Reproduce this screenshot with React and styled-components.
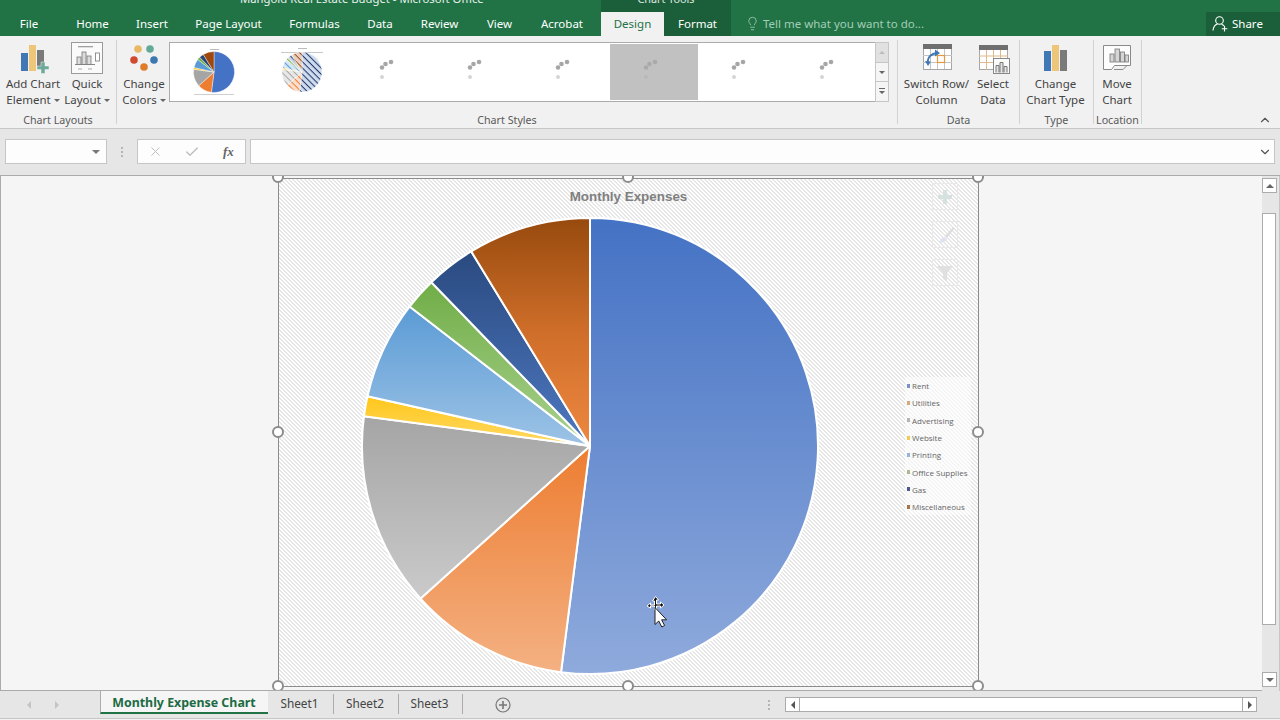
import React from "react";
import styled, { createGlobalStyle } from "styled-components";
import { Lightbulb, ChevronUp, ChevronDown, X, Check } from "lucide-react";

const Global = createGlobalStyle`
  html, body { margin: 0; padding: 0; height: 720px; overflow: hidden; background: #f1f1f1; }
  * { box-sizing: border-box; }
  #root { font-family: "Noto Sans", "Open Sans", sans-serif; }
`;

const Page = styled.div`
  width: 1280px;
  height: 720px;
  display: flex;
  flex-direction: column;
  overflow: hidden;
`;

/* ---------- title + tabs ---------- */
const TitleBar = styled.header`
  height: 36px;
  background: #217346;
  display: flex;
  flex-direction: column;
  flex: none;
`;
const TitleRow = styled.div`
  height: 12px;
  display: flex;
  overflow: hidden;
  color: #fff;
  font-size: 11.3px;
  line-height: 16px;
`;
const DocTitle = styled.div`
  width: 601px;
  padding-left: 240px;
  margin-top: -9px;
  white-space: nowrap;
  opacity: 0.9;
`;
const ToolsLabel = styled.div`
  width: 130px;
  height: 12px;
  background: #1b5f3a;
  text-align: center;
  font-size: 10.8px;
`;
const ToolsText = styled.span`
  display: block;
  margin-top: -9px;
  opacity: 0.85;
`;
const TabRow = styled.nav`
  height: 24px;
  display: flex;
  align-items: stretch;
  font-size: 11.5px;
  color: #fff;
`;
const RibbonTab = styled.div`
  width: ${(p) => p.$w}px;
  flex: none;
  margin-right: ${(p) => p.$mr || 0}px;
  padding-bottom: 2px;
  display: flex;
  align-items: center;
  justify-content: center;
  background: ${(p) => (p.$active ? "#f1f1f1" : p.$tool ? "#1b5f3a" : "transparent")};
  color: ${(p) => (p.$active ? "#217346" : "#fff")};
`;
const TellMe = styled.div`
  display: flex;
  align-items: center;
  gap: 3px;
  width: 475px;
  flex: none;
  padding: 0 0 2px 14px;
  color: #a3cdb5;
`;
const Share = styled.div`
  width: 74px;
  flex: none;
  background: #1b5f3a;
  display: flex;
  align-items: center;
  gap: 3px;
  padding: 0 0 2px 6px;
`;

/* ---------- ribbon ---------- */
const Ribbon = styled.section`
  height: 93px;
  flex: none;
  display: flex;
  background: #f1f1f1;
  border-bottom: 1px solid #c6c6c6;
`;
const Group = styled.div`
  width: ${(p) => p.$w}px;
  height: 84px;
  flex: none;
  margin-top: 4px;
  display: flex;
  flex-direction: column;
  border-right: 1px solid #d2d2d2;
`;
const GroupBody = styled.div`
  height: 72px;
  flex: none;
  display: flex;
  padding-left: ${(p) => p.$pad || 0}px;
`;
const GroupLabel = styled.div`
  height: 12px;
  flex: none;
  line-height: 16px;
  text-align: center;
  font-size: 10.7px;
  color: #5a5a5a;
  white-space: nowrap;
`;
const ToolButton = styled.div`
  width: ${(p) => p.$w}px;
  flex: none;
  display: flex;
  flex-direction: column;
  align-items: center;
  font-size: 11.5px;
  line-height: 16px;
  color: #444;
  white-space: nowrap;
  svg { display: block; flex: none; margin-bottom: -1px; }
`;
const Caret = styled.span`
  display: inline-block;
  width: 0;
  height: 0;
  margin-left: 3px;
  vertical-align: 2px;
  border-left: 3px solid transparent;
  border-right: 3px solid transparent;
  border-top: 3px solid #666;
`;
const Gallery = styled.div`
  width: 720px;
  height: 60px;
  flex: none;
  margin: 2px 0 0 1px;
  display: flex;
`;
const GalleryCells = styled.div`
  width: 706px;
  height: 60px;
  flex: none;
  display: flex;
  background: #fff;
  border: 1px solid #ababab;
  border-right: none;
  padding: 1px 0 0 0;
`;
const GalleryCell = styled.div`
  width: 88px;
  height: 56px;
  flex: none;
  background: ${(p) => (p.$sel ? "#c1c1c1" : "transparent")};
  svg { display: block; }
`;
const GalleryScroll = styled.div`
  width: 14px;
  height: 60px;
  flex: none;
  display: flex;
  flex-direction: column;
  border: 1px solid #c6c6c6;
  border-left: none;
`;
const GalleryBtn = styled.div`
  flex: 1;
  display: flex;
  align-items: center;
  justify-content: center;
  background: ${(p) => (p.$off ? "#e1e1e1" : "#f5f5f5")};
  border-bottom: ${(p) => (p.$end ? "none" : "1px solid #c6c6c6")};
  border-left: 1px solid #c6c6c6;
`;
const Collapse = styled.div`
  margin: 76px 8px 0 auto;
  width: 14px;
  height: 16px;
  color: #555;
  display: flex;
  align-items: center;
  justify-content: center;
`;

/* ---------- formula bar ---------- */
const FormulaBar = styled.section`
  height: 47px;
  flex: none;
  background: #e6e6e6;
  border-bottom: 1px solid #ababab;
  display: flex;
  align-items: flex-start;
  padding: 10px 5px 0 5px;
`;
const FieldBox = styled.div`
  height: 25px;
  width: ${(p) => (p.$w ? p.$w + "px" : "auto")};
  flex: ${(p) => (p.$w ? "none" : "1")};
  margin-left: ${(p) => p.$ml || 0}px;
  background: #fdfdfd;
  border: 1px solid #c6c6c6;
  display: flex;
  align-items: center;
  color: #bdbdbd;
`;
const NameArrow = styled.span`
  margin-left: auto;
  margin-right: 6px;
  width: 0;
  height: 0;
  border-left: 4px solid transparent;
  border-right: 4px solid transparent;
  border-top: 4px solid #777;
`;
const Grip = styled.div`
  width: 30px;
  height: 25px;
  flex: none;
  display: flex;
  flex-direction: column;
  align-items: center;
  justify-content: center;
  gap: 2px;
`;
const GripDot = styled.i`
  width: 2px;
  height: 2px;
  background: #b5b5b5;
`;
const CancelGlyph = styled(X)`
  margin-left: 10px;
`;
const ConfirmGlyph = styled(Check)`
  margin-left: 21px;
`;
const FxGlyph = styled.span`
  font-family: "Liberation Serif", serif;
  font-style: italic;
  font-weight: 700;
  font-size: 13px;
  color: #666;
  margin-left: 23px;
`;
const EndChevron = styled.span`
  margin-left: auto;
  margin-right: 2px;
  display: flex;
  color: #555;
`;

/* ---------- sheet ---------- */
const SheetRow = styled.main`
  height: 515px;
  flex: none;
  display: flex;
  overflow: hidden;
`;
const SheetArea = styled.div`
  width: 1262px;
  height: 515px;
  flex: none;
  background: #f5f5f5;
  border-left: 1px solid #ababab;
  border-bottom: 1px solid #ababab;
  padding: 2px 0 0 277px;
  position: relative;
  overflow: hidden;
`;
const Chart = styled.div`
  position: relative;
  width: 701px;
  height: 509px;
  box-shadow: inset 0 0 0 1px #8c8c8c;
  background-color: #fff;
  background-image: linear-gradient(
    45deg,
    #e7e7e7 25%,
    transparent 25%,
    transparent 50%,
    #e7e7e7 50%,
    #e7e7e7 75%,
    transparent 75%
  );
  background-size: 4px 4px;
  svg.pie { display: block; }
`;
const ChartTitle = styled.div`
  position: absolute;
  left: 0;
  right: 0;
  top: 10px;
  text-align: center;
  font-family: "Liberation Sans", Arial, sans-serif;
  font-weight: 700;
  font-size: 13.4px;
  line-height: 18px;
  color: #7f7f7f;
`;
const Handle = styled.span`
  position: absolute;
  left: ${(p) => p.$x}px;
  top: ${(p) => p.$y}px;
  width: 12px;
  height: 12px;
  margin: -6px 0 0 -6px;
  border-radius: 50%;
  background: #fff;
  border: 2px solid #8c8c8c;
`;
const ChartTools = styled.div`
  position: absolute;
  left: 654px;
  top: 5px;
  display: flex;
  flex-direction: column;
  gap: 11px;
`;
const ChartTool = styled.div`
  width: 26px;
  height: 27px;
  border: 1px solid #e9e9e9;
  display: flex;
  align-items: center;
  justify-content: center;
`;
const Legend = styled.ul`
  position: absolute;
  left: 627px;
  top: 199px;
  width: 66px;
  margin: 0;
  padding: 0 0 0 2px;
  list-style: none;
  background: rgba(255, 255, 255, 0.55);
  font-family: "Open Sans", sans-serif;
  font-size: 8px;
  color: #666;
`;
const LegendItem = styled.li`
  height: 17.3px;
  display: flex;
  align-items: center;
  gap: 2px;
  white-space: nowrap;
`;
const Swatch = styled.i`
  width: 3px;
  height: 4px;
  background: ${(p) => p.$c};
  flex: none;
`;
const PointerBox = styled.div`
  position: absolute;
  left: 360px;
  top: 417px;
  width: 36px;
  height: 36px;
  svg { display: block; }
`;
const VScroll = styled.aside`
  width: 18px;
  height: 515px;
  flex: none;
  background: #e6e6e6;
  padding: 2px 3px 0 0;
  border-right: 1px solid #c6c6c6;
  display: flex;
  flex-direction: column;
`;
const ScrollBtn = styled.div`
  width: 15px;
  height: 15px;
  flex: none;
  background: #fff;
  border: 1px solid #ababab;
  display: flex;
  align-items: center;
  justify-content: center;
`;
const VThumb = styled.div`
  margin-top: 20px;
  height: 412px;
  flex: none;
  background: #fff;
  border: 1px solid #ababab;
`;
const VGap = styled.div`
  flex: none;
  height: 47px;
`;
const Arrow = styled.span`
  width: 0;
  height: 0;
  ${(p) =>
    p.$dir === "up"
      ? "border-left:4px solid transparent;border-right:4px solid transparent;border-bottom:4px solid #666;"
      : p.$dir === "down"
      ? "border-left:4px solid transparent;border-right:4px solid transparent;border-top:4px solid #666;"
      : p.$dir === "left"
      ? `border-top:4px solid transparent;border-bottom:4px solid transparent;border-right:4px solid ${p.$c || "#555"};`
      : `border-top:4px solid transparent;border-bottom:4px solid transparent;border-left:4px solid ${p.$c || "#555"};`}
`;

/* ---------- sheet tabs ---------- */
const TabBar = styled.footer`
  height: 28px;
  flex: none;
  background: #e6e6e6;
  border-bottom: 1px solid #c6c6c6;
  display: flex;
  align-items: flex-start;
`;
const TabNav = styled.div`
  width: 100px;
  height: 27px;
  flex: none;
  display: flex;
  align-items: center;
  padding-left: 27px;
  gap: 24px;
`;
const SheetTab = styled.div`
  width: ${(p) => p.$w}px;
  height: 23px;
  flex: none;
  display: flex;
  align-items: center;
  justify-content: center;
  padding: ${(p) => (p.$active ? "2px 1px 0 0" : "0 2px 0 0")};
  font-size: ${(p) => (p.$active ? "12.4px" : "11.8px")};
  font-weight: ${(p) => (p.$active ? 700 : 400)};
  color: ${(p) => (p.$active ? "#1c6b43" : "#444")};
  background: ${(p) => (p.$active ? "#f5f5f5" : "transparent")};
  border-bottom: ${(p) => (p.$active ? "2px solid #217346" : "none")};
  border-left: ${(p) => (p.$active ? "1px solid #ababab" : "none")};
  white-space: nowrap;
`;
const TabSep = styled.i`
  width: 1px;
  height: 20px;
  margin-top: 3px;
  background: #ababab;
  flex: none;
`;
const AddSheet = styled.div`
  width: 80px;
  height: 27px;
  display: flex;
  align-items: center;
  justify-content: center;
  flex: none;
`;
const BarGrip = styled.div`
  width: 242px;
  height: 27px;
  padding-left: 225px;
  display: flex;
  flex-direction: column;
  justify-content: center;
  gap: 2px;
  flex: none;
`;
const HScroll = styled.div`
  width: 472px;
  height: 15px;
  margin-top: 6px;
  display: flex;
  flex: none;
`;
const HThumb = styled.div`
  flex: 1;
  background: #fff;
  border-top: 1px solid #ababab;
  border-bottom: 1px solid #ababab;
`;

/* ---------- data ---------- */
const SLICES = [
  { name: "Rent", a: 0, b: 187.3, c: "#4472c4", stops: ["#4472c4", "#8faadc"], sw: "#7a93c4" },
  { name: "Utilities", a: 187.3, b: 228, c: "#ed7d31", stops: ["#ed7d31", "#f4b183"], sw: "#d8a878" },
  { name: "Advertising", a: 228, b: 277.5, c: "#a5a5a5", stops: ["#a5a5a5", "#cacaca"], sw: "#b5b5b5" },
  { name: "Website", a: 277.5, b: 282.6, c: "#ffc000", stops: ["#ffc71a", "#ffd966"], sw: "#edcc55" },
  { name: "Printing", a: 282.6, b: 307.7, c: "#5b9bd5", stops: ["#5b9bd5", "#9dc3e6"], sw: "#93b5d9" },
  { name: "Office Supplies", a: 307.7, b: 315.9, c: "#70ad47", stops: ["#70ad47", "#a9d18e"], sw: "#a8ba86" },
  { name: "Gas", a: 315.9, b: 328.6, c: "#264478", stops: ["#2a4a80", "#4e78c0"], sw: "#4a5a8c" },
  { name: "Miscellaneous", a: 328.6, b: 360, c: "#9e480e", stops: ["#974a0e", "#cf6e2a", "#ee8840"], sw: "#a8744a" },
];

const pt = (cx, cy, r, deg) => {
  const t = (deg * Math.PI) / 180;
  return [cx + r * Math.sin(t), cy - r * Math.cos(t)];
};
const slice = (cx, cy, r, a, b) => {
  const [x0, y0] = pt(cx, cy, r, a);
  const [x1, y1] = pt(cx, cy, r, b);
  return `M${cx} ${cy}L${x0.toFixed(2)} ${y0.toFixed(2)}A${r} ${r} 0 ${b - a > 180 ? 1 : 0} 1 ${x1.toFixed(2)} ${y1.toFixed(2)}Z`;
};

const Spinner = ({ sel }) => (
  <svg width="88" height="56" viewBox="0 0 88 56">
    <g fill={sel ? "#aaaaaa" : "#a6a6a6"}>
      <circle cx="36" cy="23.5" r="2.3" />
      <circle cx="39.5" cy="20" r="2.3" />
      <circle cx="45" cy="18" r="2.3" />
    </g>
    <circle cx="36" cy="33" r="2" fill={sel ? "#b8b8b8" : "#d5d5d5"} />
  </svg>
);

const ThumbSolid = () => (
  <svg width="88" height="56" viewBox="0 0 88 56">
    <rect x="40" y="5" width="9" height="0.8" fill="#aaa" />
    {SLICES.map((s) => (
      <path key={s.name} d={slice(44, 28, 20.5, s.a, s.b)} fill={s.c} stroke="#fff" strokeWidth="0.4" />
    ))}
    <rect x="24" y="50" width="40" height="0.8" fill="#c4c4c4" />
  </svg>
);

const ThumbHatch = () => (
  <svg width="88" height="56" viewBox="0 0 88 56">
    <defs>
      {SLICES.map((s, i) => (
        <pattern key={s.name} id={`h${i}`} width="4.4" height="4.4" patternUnits="userSpaceOnUse" patternTransform="rotate(45)">
          <rect width="4.4" height="4.4" fill="#fff" />
          <rect width="4.4" height="2.6" fill={s.c} opacity="0.25" />
          <rect y="2.6" width="4.4" height="1.2" fill={i === 0 ? "#1f3a6e" : s.c} />
        </pattern>
      ))}
    </defs>
    <rect x="40" y="4" width="9" height="0.8" fill="#aaa" />
    <rect x="23" y="8" width="42" height="0.8" fill="#bbb" />
    {SLICES.map((s, i) => (
      <path key={s.name} d={slice(44, 28, 20, s.a, s.b)} fill={`url(#h${i})`} stroke="#fff" strokeWidth="0.4" />
    ))}
  </svg>
);

const AddChartIcon = () => (
  <svg width="36" height="37" viewBox="15 40 36 37">
    <rect x="21" y="53" width="7" height="18" fill="#3f78b5" />
    <rect x="29" y="45" width="7" height="26" fill="#eec67a" />
    <rect x="37" y="50" width="7" height="18" fill="#7a7a7a" />
    <path d="M41 62h4v4h4v3.5h-4v4h-4v-4h-4v-3.5h4z" fill="#6fa99a" stroke="#f1f1f1" strokeWidth="0.5" />
  </svg>
);
const QuickLayoutIcon = () => (
  <svg width="36" height="37" viewBox="69 40 36 37">
    <rect x="71.5" y="42.5" width="31" height="31" fill="#fafafa" stroke="#9a9a9a" />
    <rect x="78" y="46" width="15" height="1.3" fill="#a0a0a0" />
    <path d="M75 64.5h20" stroke="#888" fill="none" />
    <g fill="#dcdcdc" stroke="#777" strokeWidth="0.8">
      <rect x="77" y="57" width="4" height="7.5" />
      <rect x="82" y="52" width="4" height="12.5" />
      <rect x="87" y="56" width="4" height="8.5" />
    </g>
    <rect x="95.5" y="53" width="4" height="8" fill="#fff" stroke="#777" strokeWidth="0.8" />
    <path d="M78 69h4M88 69h4" stroke="#aaa" />
  </svg>
);
const ChangeColorsIcon = () => (
  <svg width="36" height="37" viewBox="126 40 36 37">
    <circle cx="138" cy="49" r="3.8" fill="#e9b865" />
    <circle cx="150" cy="49" r="3.8" fill="#63a998" />
    <circle cx="134" cy="60" r="3.8" fill="#d04a30" />
    <circle cx="154" cy="60" r="3.8" fill="#3b78b0" />
    <circle cx="144" cy="67" r="3.8" fill="#e07b28" />
  </svg>
);
const SwitchIcon = () => (
  <svg width="36" height="37" viewBox="918 40 36 37">
    <rect x="922.5" y="44.5" width="28" height="25" fill="#fff" stroke="#a6a6a6" />
    <rect x="922" y="44" width="29" height="5" fill="#6e6e6e" />
    <path d="M922 55.5h29M922 62.5h29M929.5 49v20M936.5 49v20M943.5 49v20" stroke="#c4c4c4" fill="none" />
    <rect x="936.5" y="55.5" width="7" height="7" fill="none" stroke="#e39a3c" strokeWidth="1.2" />
    <path d="M927 63c-1-6 4-10 10-10" stroke="#3f78b5" strokeWidth="1.8" fill="none" />
    <path d="M934 49.5l5 3.5-5 3.5z M924 61l6 .5-3 4.5z" fill="#3f78b5" />
  </svg>
);
const SelectDataIcon = () => (
  <svg width="36" height="37" viewBox="975 40 36 37">
    <rect x="979.5" y="45.5" width="28" height="24" fill="#fff" stroke="#a6a6a6" />
    <rect x="979" y="45" width="29" height="5" fill="#6e6e6e" />
    <path d="M979 56h29M979 62.5h29M986.5 50v20M993.5 50v20M1000.5 50v20" stroke="#e0b98a" fill="none" />
    <rect x="993.5" y="58.5" width="16" height="15" fill="#fbfbfb" stroke="#888" />
    <path d="M996 72.5v-7h3v7M1000 72.5v-10h3v10M1004 72.5v-6h3v6" stroke="#777" fill="#e4e4e4" />
  </svg>
);
const ChangeTypeIcon = () => (
  <svg width="36" height="37" viewBox="1037 40 36 37">
    <rect x="1043" y="51" width="7" height="20" fill="#3f78b5" />
    <rect x="1051" y="45" width="7" height="26" fill="#eec67a" />
    <rect x="1059" y="50" width="7" height="21" fill="#7a7a7a" />
  </svg>
);
const MoveChartIcon = () => (
  <svg width="36" height="37" viewBox="1099 40 36 37">
    <path d="M1103.5 45.5h27v20h-16l-3 4h-8z" fill="#fdfdfd" stroke="#8a8a8a" />
    <path d="M1114 69.5h9l4-4" fill="none" stroke="#8a8a8a" />
    <g fill="#d6d6d6" stroke="#777" strokeWidth="0.8">
      <rect x="1110" y="54" width="4" height="8" />
      <rect x="1115" y="49" width="4.5" height="13" />
      <rect x="1120.5" y="52" width="4" height="10" />
      <rect x="1125" y="55" width="3.5" height="7" />
    </g>
  </svg>
);
const ShareIcon = () => (
  <svg width="17" height="17" viewBox="0 0 17 17" fill="none" stroke="#fff" strokeWidth="1.1">
    <circle cx="7.5" cy="5.5" r="3.8" />
    <path d="M1 15.5c.4-3.6 2.5-6 4.5-6.5M9.5 9.2c1 .3 2 .9 2.6 1.8" />
    <path d="M12.5 11v5.5M9.8 13.8h5.500" />
  </svg>
);
const PointerIcon = () => (
  <svg width="36" height="36" viewBox="0 0 36 36">
    <path
      d="M17.5 1.500l3 3.500h-2v4h4v-2l3.500 3-3.500 3v-2h-4v4h-2v-4h-4v2L9 11l3.500-3v2h4v-4h-2z"
      fill="#111"
      stroke="#fff"
      strokeWidth="1"
      strokeLinejoin="round"
    />
    <path d="M17 12.500v17l3.800-3.500 3 6 2.800-1.500-3-5.700h5z" fill="#fff" stroke="#222" strokeWidth="1" strokeLinejoin="round" />
  </svg>
);

const Pie = () => (
  <svg className="pie" width="701" height="509" viewBox="278 178 701 509">
    <defs>
      {SLICES.map((s, i) => (
        <linearGradient key={s.name} id={`g${i}`} x1="0" y1="0" x2="0" y2="1">
          {s.stops.map((c, j) => (
            <stop key={c} offset={j / (s.stops.length - 1)} stopColor={c} />
          ))}
        </linearGradient>
      ))}
    </defs>
    <circle cx="590" cy="446" r="229" fill="#fff" />
    {SLICES.map((s, i) => (
      <path
        key={s.name}
        d={slice(590, 446, 228, s.a, s.b)}
        fill={`url(#g${i})`}
        stroke="#fff"
        strokeWidth="2"
        strokeLinejoin="round"
      />
    ))}
  </svg>
);

const HANDLES = [
  [0, -1], [350, -1], [700, -1],
  [0, 254], [700, 254],
  [0, 508], [350, 508], [700, 508],
];

export default function App() {
  return (
    <Page>
      <Global />
      <TitleBar>
        <TitleRow>
          <DocTitle>Mangold Real Estate Budget - Microsoft Office</DocTitle>
          <ToolsLabel>
            <ToolsText>Chart Tools</ToolsText>
          </ToolsLabel>
        </TitleRow>
        <TabRow>
          <RibbonTab $w={58} $mr={4}>File</RibbonTab>
          <RibbonTab $w={61}>Home</RibbonTab>
          <RibbonTab $w={58}>Insert</RibbonTab>
          <RibbonTab $w={95}>Page Layout</RibbonTab>
          <RibbonTab $w={77}>Formulas</RibbonTab>
          <RibbonTab $w={54}>Data</RibbonTab>
          <RibbonTab $w={65}>Review</RibbonTab>
          <RibbonTab $w={55}>View</RibbonTab>
          <RibbonTab $w={70} $mr={4}>Acrobat</RibbonTab>
          <RibbonTab $w={63} $active>
            Design
          </RibbonTab>
          <RibbonTab $w={67} $tool>
            Format
          </RibbonTab>
          <TellMe>
            <Lightbulb size={15} strokeWidth={1.3} color="#a3cdb5" />
            <span>Tell me what you want to do...</span>
          </TellMe>
          <Share>
            <ShareIcon />
            <span>Share</span>
          </Share>
        </TabRow>
      </TitleBar>

      <Ribbon>
        <Group $w={117}>
          <GroupBody $pad={4}>
            <ToolButton $w={58}>
              <AddChartIcon />
              <span>Add Chart</span>
              <span>
                Element
                <Caret />
              </span>
            </ToolButton>
            <ToolButton $w={50}>
              <QuickLayoutIcon />
              <span>Quick</span>
              <span>
                Layout
                <Caret />
              </span>
            </ToolButton>
          </GroupBody>
          <GroupLabel>Chart Layouts</GroupLabel>
        </Group>
        <Group $w={781}>
          <GroupBody $pad={3}>
            <ToolButton $w={48}>
              <ChangeColorsIcon />
              <span>Change</span>
              <span>
                Colors
                <Caret />
              </span>
            </ToolButton>
            <Gallery>
              <GalleryCells>
                <GalleryCell>
                  <ThumbSolid />
                </GalleryCell>
                <GalleryCell>
                  <ThumbHatch />
                </GalleryCell>
                <GalleryCell>
                  <Spinner />
                </GalleryCell>
                <GalleryCell>
                  <Spinner />
                </GalleryCell>
                <GalleryCell>
                  <Spinner />
                </GalleryCell>
                <GalleryCell $sel>
                  <Spinner sel />
                </GalleryCell>
                <GalleryCell>
                  <Spinner />
                </GalleryCell>
                <GalleryCell>
                  <Spinner />
                </GalleryCell>
              </GalleryCells>
              <GalleryScroll>
                <GalleryBtn $off>
                  <svg width="8" height="5" viewBox="0 0 8 5">
                    <path d="M1 4l3-3 3 3z" fill="#bbb" />
                  </svg>
                </GalleryBtn>
                <GalleryBtn>
                  <svg width="8" height="5" viewBox="0 0 8 5">
                    <path d="M1 1h6L4 4z" fill="#666" />
                  </svg>
                </GalleryBtn>
                <GalleryBtn $end>
                  <svg width="8" height="7" viewBox="0 0 8 7">
                    <path d="M1 0h6v1H1zM1 3h6L4 6z" fill="#666" />
                  </svg>
                </GalleryBtn>
              </GalleryScroll>
            </Gallery>
          </GroupBody>
          <GroupLabel>Chart Styles</GroupLabel>
        </Group>
        <Group $w={122}>
          <GroupBody $pad={5}>
            <ToolButton $w={67}>
              <SwitchIcon />
              <span>Switch Row/</span>
              <span>Column</span>
            </ToolButton>
            <ToolButton $w={46}>
              <SelectDataIcon />
              <span>Select</span>
              <span>Data</span>
            </ToolButton>
          </GroupBody>
          <GroupLabel>Data</GroupLabel>
        </Group>
        <Group $w={74}>
          <GroupBody>
            <ToolButton $w={71}>
              <ChangeTypeIcon />
              <span>Change</span>
              <span>Chart Type</span>
            </ToolButton>
          </GroupBody>
          <GroupLabel>Type</GroupLabel>
        </Group>
        <Group $w={48}>
          <GroupBody>
            <ToolButton $w={46}>
              <MoveChartIcon />
              <span>Move</span>
              <span>Chart</span>
            </ToolButton>
          </GroupBody>
          <GroupLabel>Location</GroupLabel>
        </Group>
        <Collapse>
          <ChevronUp size={14} strokeWidth={2} />
        </Collapse>
      </Ribbon>

      <FormulaBar>
        <FieldBox $w={102}>
          <NameArrow />
        </FieldBox>
        <Grip>
          <GripDot />
          <GripDot />
          <GripDot />
        </Grip>
        <FieldBox $w={109}>
          <CancelGlyph size={15} strokeWidth={1.6} />
          <ConfirmGlyph size={16} strokeWidth={2} />
          <FxGlyph>fx</FxGlyph>
        </FieldBox>
        <FieldBox $ml={4}>
          <EndChevron>
            <ChevronDown size={14} strokeWidth={2} />
          </EndChevron>
        </FieldBox>
      </FormulaBar>

      <SheetRow>
        <SheetArea>
          <Chart>
            <Pie />
            <ChartTitle>Monthly Expenses</ChartTitle>
            <ChartTools>
              <ChartTool>
                <svg width="14" height="14" viewBox="0 0 14 14">
                  <path d="M5 0h4v5h5v4H9v5H5V9H0V5h5z" fill="#d5e2df" />
                </svg>
              </ChartTool>
              <ChartTool>
                <svg width="20" height="20" viewBox="0 0 20 20">
                  <path d="M18 2l-8 9 2 2 7-9z" fill="#dedede" />
                  <path d="M10 12c-3 0-4 3-6 5 3 1 7 0 8-3z" fill="#dde3ee" />
                </svg>
              </ChartTool>
              <ChartTool>
                <svg width="18" height="18" viewBox="0 0 18 18">
                  <path d="M1 2h16l-6 7v8l-4-2V9z" fill="#e0e0e0" />
                </svg>
              </ChartTool>
            </ChartTools>
            <Legend>
              {SLICES.map((s) => (
                <LegendItem key={s.name}>
                  <Swatch $c={s.sw} />
                  <span>{s.name}</span>
                </LegendItem>
              ))}
            </Legend>
            {HANDLES.map(([x, y]) => (
              <Handle key={`${x}-${y}`} $x={x} $y={y} />
            ))}
            <PointerBox>
              <PointerIcon />
            </PointerBox>
          </Chart>
        </SheetArea>
        <VScroll>
          <ScrollBtn>
            <Arrow $dir="up" />
          </ScrollBtn>
          <VThumb />
          <VGap />
          <ScrollBtn>
            <Arrow $dir="down" />
          </ScrollBtn>
        </VScroll>
      </SheetRow>

      <TabBar>
        <TabNav>
          <Arrow $dir="left" $c="#c4c4c4" />
          <Arrow $dir="right" $c="#c4c4c4" />
        </TabNav>
        <SheetTab $w={168} $active>
          Monthly Expense Chart
        </SheetTab>
        <SheetTab $w={65}>Sheet1</SheetTab>
        <TabSep />
        <SheetTab $w={64}>Sheet2</SheetTab>
        <TabSep />
        <SheetTab $w={63}>Sheet3</SheetTab>
        <TabSep />
        <AddSheet>
          <svg width="16" height="16" viewBox="0 0 16 16" fill="none" stroke="#777" strokeWidth="1.2">
            <circle cx="8" cy="8" r="7" />
            <path d="M8 4v8M4 8h8" strokeWidth="1.6" />
          </svg>
        </AddSheet>
        <BarGrip>
          <GripDot />
          <GripDot />
          <GripDot />
        </BarGrip>
        <HScroll>
          <ScrollBtn>
            <Arrow $dir="left" />
          </ScrollBtn>
          <HThumb />
          <ScrollBtn>
            <Arrow $dir="right" />
          </ScrollBtn>
        </HScroll>
      </TabBar>
    </Page>
  );
}
